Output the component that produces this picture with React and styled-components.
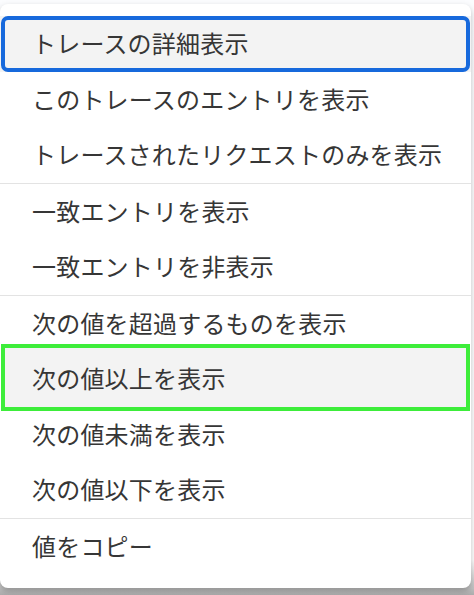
import { Fragment } from "react";
import styled, { createGlobalStyle } from "styled-components";

// ページ全体
const GlobalStyle = createGlobalStyle`
  html, body {
    margin: 0;
    padding: 0;
    background: #ffffff;
    font-family: "Noto Sans CJK JP", "Noto Sans", sans-serif;
  }
  #root {
    width: 474px;
    height: 595px;
    overflow: hidden;
  }
`;

const Backdrop = styled.div`
  height: 595px;
  padding-top: 4px;
  box-sizing: border-box;
  background: linear-gradient(#fbfcfe 0, #ffffff 560px, #c2c2c2 588px, #acacac 595px);
`;

const Menu = styled.ul`
  width: 471px;
  margin: 0;
  padding: 12px 0 14px;
  list-style: none;
  box-sizing: border-box;
  background: #ffffff;
  border-radius: 8px;
  box-shadow: 0 3px 6px rgba(0, 0, 0, 0.25);
`;

const Item = styled.li`
  position: relative;
  display: flex;
  align-items: center;
  height: 55.5px;
  padding-left: 32px;
  padding-bottom: 2px;
  box-sizing: border-box;
  font-size: 24px;
  color: #363636;
  letter-spacing: 0.2px;
  white-space: nowrap;
  background: ${(p) => (p.$focused ? "#f3f3f3" : "transparent")};

  /* フォーカスリング */
  ${(p) =>
    p.$focused &&
    `
    &::after {
      content: "";
      position: absolute;
      inset: 0 1px 0 1px;
      border: 4px solid #1769dc;
      border-radius: 7px;
    }
  `}

  /* ハイライト枠 */
  ${(p) =>
    p.$marked &&
    `
    &::before {
      content: "";
      position: absolute;
      top: -7px;
      bottom: -4px;
      left: 1px;
      right: 1px;
      background: #f3f3f3;
      border: 4.5px solid #3ded3a;
    }
  `}
`;

const Label = styled.span`
  position: relative;
  z-index: 1;
`;

const Divider = styled.li`
  height: 1px;
  background: #e3e3e3;
`;

const groups = [
  [
    { label: "トレースの詳細表示", focused: true },
    { label: "このトレースのエントリを表示" },
    { label: "トレースされたリクエストのみを表示" },
  ],
  [{ label: "一致エントリを表示" }, { label: "一致エントリを非表示" }],
  [
    { label: "次の値を超過するものを表示" },
    { label: "次の値以上を表示", marked: true },
    { label: "次の値未満を表示" },
    { label: "次の値以下を表示" },
  ],
  [{ label: "値をコピー" }],
];

const App = () => {
  return (
    <>
      <GlobalStyle />
      <Backdrop>
        <Menu>
          {groups.map((group, gi) => (
            <Fragment key={gi}>
              {gi > 0 && <Divider />}
              {group.map((item) => (
                <Item key={item.label} $focused={item.focused} $marked={item.marked}>
                  <Label>{item.label}</Label>
                </Item>
              ))}
            </Fragment>
          ))}
        </Menu>
      </Backdrop>
    </>
  );
};

export default App;
